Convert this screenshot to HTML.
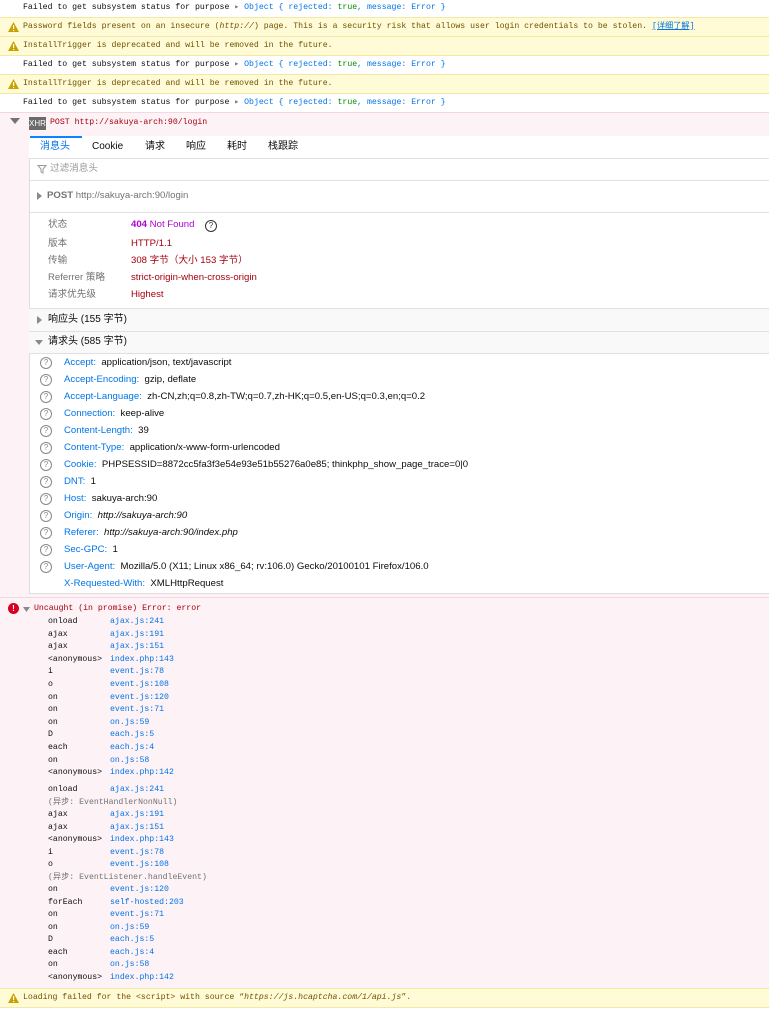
<!DOCTYPE html>
<html><head><meta charset="utf-8"><style>
*{margin:0;padding:0;box-sizing:border-box}
body{width:769px;height:1010px;position:relative;background:#fff;overflow:hidden;font-family:"Liberation Mono","Noto Sans CJK SC",monospace;font-size:8.2px;color:#0c0c0d}
.a{position:absolute;white-space:pre;line-height:12px}
.m{}
.s{font-family:"Liberation Sans","Noto Sans CJK SC",sans-serif;font-size:9.6px}
.b{color:#0074e8}.g{color:#058b00}.r{color:#a4000f}.w{color:#715100}.gr{color:#737373}
.warn{position:absolute;left:0;width:769px;background:#fffbd6;border-top:1px solid #f3e8a6;border-bottom:1px solid #f3e8a6}
.line{position:absolute;left:0;width:769px;height:1px;background:#e8e8e8}
.wi{position:absolute;width:11px;height:10px}
.q{position:absolute;width:12px;height:12px;border:1px solid #888;border-radius:50%;font:8px "Liberation Sans",sans-serif;color:#888;text-align:center;line-height:10px}
</style></head><body>

<div class="a m" style="left:23px;top:2px">Failed to get subsystem status for purpose <span class="gr">▸</span> <span class="b">Object { rejected: <span class="g">true</span>, message: Error }</span></div>
<div class="line" style="top:17px"></div>
<div class="warn" style="top:17px;height:20px"></div>
<svg class="wi" style="left:8px;top:22px" viewBox="0 0 11 10"><path d="M5.5 0L11 10H0Z" fill="#c9a100"/><rect x="5" y="3" width="1.2" height="4" fill="#fff"/><rect x="5" y="8" width="1.2" height="1.1" fill="#fff"/></svg>
<div class="a m w" style="left:23px;top:21px">Password fields present on an insecure (<i>http://</i>) page. This is a security risk that allows user login credentials to be stolen. <span class="b" style="text-decoration:underline">[详细了解]</span></div>
<div class="warn" style="top:36px;height:20px"></div>
<svg class="wi" style="left:8px;top:41px" viewBox="0 0 11 10"><path d="M5.5 0L11 10H0Z" fill="#c9a100"/><rect x="5" y="3" width="1.2" height="4" fill="#fff"/><rect x="5" y="8" width="1.2" height="1.1" fill="#fff"/></svg>
<div class="a m w" style="left:23px;top:40px">InstallTrigger is deprecated and will be removed in the future.</div>
<div class="a m" style="left:23px;top:59px">Failed to get subsystem status for purpose <span class="gr">▸</span> <span class="b">Object { rejected: <span class="g">true</span>, message: Error }</span></div>
<div class="warn" style="top:74px;height:20px"></div>
<svg class="wi" style="left:8px;top:79px" viewBox="0 0 11 10"><path d="M5.5 0L11 10H0Z" fill="#c9a100"/><rect x="5" y="3" width="1.2" height="4" fill="#fff"/><rect x="5" y="8" width="1.2" height="1.1" fill="#fff"/></svg>
<div class="a m w" style="left:23px;top:78px">InstallTrigger is deprecated and will be removed in the future.</div>
<div class="a m" style="left:23px;top:97px">Failed to get subsystem status for purpose <span class="gr">▸</span> <span class="b">Object { rejected: <span class="g">true</span>, message: Error }</span></div>

<div style="position:absolute;left:0;top:112px;width:769px;height:486px;background:#fdf2f5;border-top:1px solid #f5d8df;border-bottom:1px solid #f5d8df"></div>
<svg style="position:absolute;left:10px;top:118px" width="10" height="7"><path d="M0 0H10L5 6Z" fill="#737373"/></svg>
<div style="position:absolute;left:29px;top:117px;width:17px;height:13px;background:#6b6b6b;color:#fff;font:8px 'Liberation Sans',sans-serif;line-height:13px;text-align:center">XHR</div>
<div class="a m r" style="left:50px;top:117px">POST http://sakuya-arch:90/login</div>

<div style="position:absolute;left:29px;top:136px;width:740px;height:458px;background:#fff;border-left:1px solid #ddd"></div>
<div style="position:absolute;left:29px;top:136px;width:740px;height:23px;background:#fff;border-bottom:1px solid #e0e0e2"></div>
<div style="position:absolute;left:30px;top:136px;width:52px;height:2px;background:#0a84ff"></div>
<div class="a s b" style="left:40px;top:141px;font-size:10px">消息头</div>
<div class="a s" style="left:92px;top:141px;font-size:10px">Cookie</div>
<div class="a s" style="left:145px;top:141px;font-size:10px">请求</div>
<div class="a s" style="left:186px;top:141px;font-size:10px">响应</div>
<div class="a s" style="left:227px;top:141px;font-size:10px">耗时</div>
<div class="a s" style="left:268px;top:141px;font-size:10px">栈跟踪</div>
<svg style="position:absolute;left:37px;top:164px" width="10" height="10" viewBox="0 0 10 10"><path d="M1 1.5H9L6 5V9L4 8V5Z" fill="none" stroke="#999"/></svg>
<div class="a s" style="left:50px;top:163px;color:#999">过滤消息头</div>
<div style="position:absolute;left:29px;top:180px;width:740px;height:1px;background:#e0e0e2"></div>
<svg style="position:absolute;left:37px;top:192px" width="6" height="8"><path d="M0 0V8L5 4Z" fill="#8a8a8a"/></svg>
<div class="a s" style="left:47px;top:190px;color:#737373"><b style="font-weight:600">POST</b> http://sakuya-arch:90/login</div>
<div style="position:absolute;left:29px;top:212px;width:740px;height:1px;background:#e0e0e2"></div>

<div class="a s gr" style="left:48px;top:219px">状态</div>
<div class="a s" style="left:131px;top:219px;color:#b300d6"><b>404</b> Not Found</div>
<div class="q" style="left:205px;top:220px;border-color:#333;color:#333">?</div>
<div class="a s gr" style="left:48px;top:238px">版本</div>
<div class="a s r" style="left:131px;top:238px">HTTP/1.1</div>
<div class="a s gr" style="left:48px;top:255px">传输</div>
<div class="a s r" style="left:131px;top:255px">308 字节（大小 153 字节）</div>
<div class="a s gr" style="left:48px;top:272px">Referrer 策略</div>
<div class="a s r" style="left:131px;top:272px">strict-origin-when-cross-origin</div>
<div class="a s gr" style="left:48px;top:289px">请求优先级</div>
<div class="a s r" style="left:131px;top:289px">Highest</div>

<div style="position:absolute;left:29px;top:308px;width:740px;height:24px;background:#f9f9fa;border-top:1px solid #e0e0e2;border-bottom:1px solid #e0e0e2"></div>
<svg style="position:absolute;left:37px;top:316px" width="6" height="8"><path d="M0 0V8L5 4Z" fill="#8a8a8a"/></svg>
<div class="a s" style="left:48px;top:314px;font-size:10px">响应头 (155 字节)</div>
<div style="position:absolute;left:29px;top:332px;width:740px;height:22px;background:#f9f9fa;border-bottom:1px solid #e0e0e2"></div>
<svg style="position:absolute;left:35px;top:340px" width="8" height="5"><path d="M0 0H8L4 5Z" fill="#8a8a8a"/></svg>
<div class="a s" style="left:48px;top:336px;font-size:10px">请求头 (585 字节)</div>

<div class="q" style="left:40px;top:357px">?</div><div class="a s" style="left:64px;top:357px"><span class="b">Accept:</span>  application/json, text/javascript</div>
<div class="q" style="left:40px;top:374px">?</div><div class="a s" style="left:64px;top:374px"><span class="b">Accept-Encoding:</span>  gzip, deflate</div>
<div class="q" style="left:40px;top:391px">?</div><div class="a s" style="left:64px;top:391px"><span class="b">Accept-Language:</span>  zh-CN,zh;q=0.8,zh-TW;q=0.7,zh-HK;q=0.5,en-US;q=0.3,en;q=0.2</div>
<div class="q" style="left:40px;top:408px">?</div><div class="a s" style="left:64px;top:408px"><span class="b">Connection:</span>  keep-alive</div>
<div class="q" style="left:40px;top:425px">?</div><div class="a s" style="left:64px;top:425px"><span class="b">Content-Length:</span>  39</div>
<div class="q" style="left:40px;top:442px">?</div><div class="a s" style="left:64px;top:442px"><span class="b">Content-Type:</span>  application/x-www-form-urlencoded</div>
<div class="q" style="left:40px;top:459px">?</div><div class="a s" style="left:64px;top:459px"><span class="b">Cookie:</span>  PHPSESSID=8872cc5fa3f3e54e93e51b55276a0e85; thinkphp_show_page_trace=0|0</div>
<div class="q" style="left:40px;top:476px">?</div><div class="a s" style="left:64px;top:476px"><span class="b">DNT:</span>  1</div>
<div class="q" style="left:40px;top:493px">?</div><div class="a s" style="left:64px;top:493px"><span class="b">Host:</span>  sakuya-arch:90</div>
<div class="q" style="left:40px;top:510px">?</div><div class="a s" style="left:64px;top:510px"><span class="b">Origin:</span>  <i>http://sakuya-arch:90</i></div>
<div class="q" style="left:40px;top:527px">?</div><div class="a s" style="left:64px;top:527px"><span class="b">Referer:</span>  <i>http://sakuya-arch:90/index.php</i></div>
<div class="q" style="left:40px;top:544px">?</div><div class="a s" style="left:64px;top:544px"><span class="b">Sec-GPC:</span>  1</div>
<div class="q" style="left:40px;top:561px">?</div><div class="a s" style="left:64px;top:561px"><span class="b">User-Agent:</span>  Mozilla/5.0 (X11; Linux x86_64; rv:106.0) Gecko/20100101 Firefox/106.0</div>
<div class="a s" style="left:64px;top:578px"><span class="b">X-Requested-With:</span>  XMLHttpRequest</div>
<div style="position:absolute;left:29px;top:593px;width:740px;height:1px;background:#ddd"></div>

<div style="position:absolute;left:0;top:598px;width:769px;height:390px;background:#fdf2f5"></div>
<div style="position:absolute;left:8px;top:603px;width:11px;height:11px;border-radius:50%;background:#d70022;color:#fff;font:bold 8px 'Liberation Sans',sans-serif;text-align:center;line-height:11px">!</div>
<svg style="position:absolute;left:23px;top:607px" width="7" height="5"><path d="M0 0H7L3.5 5Z" fill="#8a8a8a"/></svg>
<div class="a m r" style="left:34px;top:603px">Uncaught (in promise) Error: error</div>

<div class="a m" style="left:48px;top:616px;line-height:12.6px">onload
ajax
ajax
&lt;anonymous&gt;
i
o
on
on
on
D
each
on
&lt;anonymous&gt;</div>
<div class="a m b" style="left:110px;top:616px;line-height:12.6px">ajax.js:241
ajax.js:191
ajax.js:151
index.php:143
event.js:78
event.js:108
event.js:120
event.js:71
on.js:59
each.js:5
each.js:4
on.js:58
index.php:142</div>

<div class="a m" style="left:48px;top:784px;line-height:12.5px">onload
<span class="gr">(异步: EventHandlerNonNull)</span>
ajax
ajax
&lt;anonymous&gt;
i
o
<span class="gr">(异步: EventListener.handleEvent)</span>
on
forEach
on
on
D
each
on
&lt;anonymous&gt;</div>
<div class="a m b" style="left:110px;top:784px;line-height:12.5px">ajax.js:241

ajax.js:191
ajax.js:151
index.php:143
event.js:78
event.js:108

event.js:120
self-hosted:203
event.js:71
on.js:59
each.js:5
each.js:4
on.js:58
index.php:142</div>

<div class="warn" style="top:988px;height:20px"></div>
<svg class="wi" style="left:8px;top:993px" viewBox="0 0 11 10"><path d="M5.5 0L11 10H0Z" fill="#c9a100"/><rect x="5" y="3" width="1.2" height="4" fill="#fff"/><rect x="5" y="8" width="1.2" height="1.1" fill="#fff"/></svg>
<div class="a m w" style="left:23px;top:992px">Loading failed for the &lt;script&gt; with source “<i>https://js.hcaptcha.com/1/api.js</i>”.</div>
</body></html>
